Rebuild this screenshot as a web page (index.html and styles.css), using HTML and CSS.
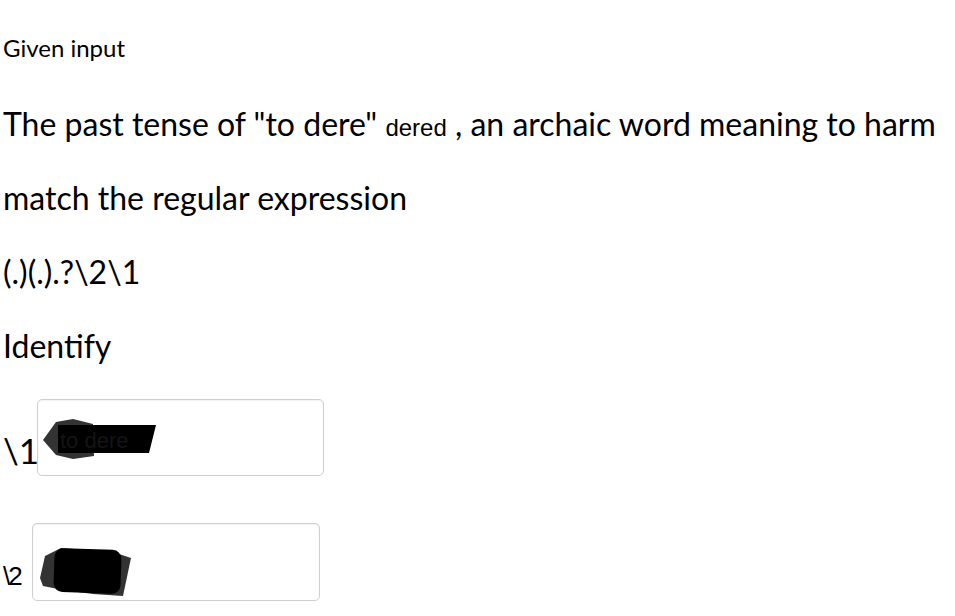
FILE: index.html
```html
<!DOCTYPE html>
<html>
<head>
<meta charset="utf-8">
<link rel="stylesheet" href="styles.css">
</head>
<body>
<div class="page">
  <div class="given">Given input</div>
  <div class="line first">The past tense of "to dere" <span class="word">dered</span> , an archaic word meaning to harm</div>
  <div class="line second">match the regular expression</div>
  <div class="line">(.)(.).?\2\1</div>
  <div class="line">Identify</div>
  <div class="row row1">
    <span class="lbl lbl1">\1</span>
    <div class="box box1">
      <svg class="redact" width="130" height="70" viewBox="0 0 130 70">
        <polygon points="5,40 18,22 35,19 55,24 56,56 35,59 18,55" fill="#333"/>
        <polygon points="20,25 118,25 111,53 20,53" fill="#000"/>
        <text x="22" y="48" font-family="Liberation Sans, sans-serif" font-size="22" fill="#141414">to dere</text>
      </svg>
    </div>
  </div>
  <div class="row row2">
    <span class="lbl lbl2">\2</span>
    <div class="box box2">
      <svg class="redact" width="110" height="78" viewBox="0 0 110 78">
        <polygon points="7,54 12,32 28,24 80,28 98,34 90,72 60,70 30,66 10,62" fill="#333"/>
        <rect x="21" y="25" width="67" height="44" rx="9" fill="#000" transform="rotate(2 55 47)"/>
      </svg>
    </div>
  </div>
</div>
</body>
</html>
```
FILE: styles.css
```css
html, body {
  margin: 0;
  padding: 0;
  background: #fff;
}
.page {
  padding-left: 3px;
  font-family: Lato, "Open Sans", sans-serif;
  color: #000;
}
.given {
  font-size: 24px;
  line-height: 30px;
  margin-top: 33px;
}
.line {
  font-size: 32px;
  line-height: 44px;
  margin-top: 30px;
  white-space: nowrap;
}
.line.first {
  margin-top: 39px;
}
.line.second {
  margin-top: 26px;
}
.word {
  font-family: "Liberation Sans", Arial, sans-serif;
  font-size: 24px;
}
.row {
  display: flex;
  align-items: flex-start;
}
.row1 {
  margin-top: 31px;
}
.row2 {
  margin-top: 47px;
}
.lbl {
  white-space: nowrap;
}
.lbl1 {
  font-size: 35px;
  line-height: 36px;
  margin-top: 33px;
  width: 34px;
}
.lbl2 {
  font-family: "Liberation Sans", Arial, sans-serif;
  font-size: 26px;
  line-height: 26px;
  margin-top: 40px;
  width: 24px;
  margin-right: 5px;
  letter-spacing: -2px;
}
.box {
  position: relative;
  box-sizing: border-box;
  border: 1px solid #cfcfcf;
  border-radius: 5px;
  box-shadow: inset 0 1px 2px rgba(0, 0, 0, 0.06);
  background: #fff;
}
.box1 {
  width: 287px;
  height: 77px;
}
.box2 {
  width: 288px;
  height: 78px;
}
.redact {
  position: absolute;
  left: 0;
  top: 0;
}
```
